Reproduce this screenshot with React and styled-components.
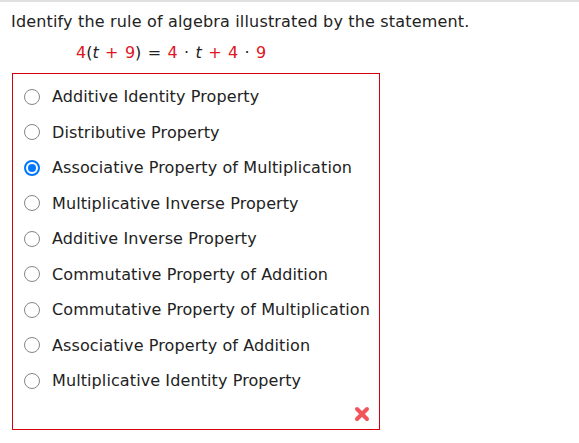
import React from "react";
import styled, { createGlobalStyle } from "styled-components";

const GlobalStyle = createGlobalStyle`
  body {
    margin: 0;
    background: #fff;
    font-family: Verdana, "DejaVu Sans", sans-serif;
    color: #222;
  }
`;

const Page = styled.div`
  border-top: 2px solid #e0e0e0;
  padding: 10px 0 0 11px;
`;

const Prompt = styled.div`
  font-size: 16px;
  line-height: 20px;
  letter-spacing: 0.17px;
  color: #222;
`;

const Equation = styled.div`
  margin: 11px 0 0 65px;
  font-size: 16px;
  line-height: 20px;
  word-spacing: 1.3px;
  color: #222;
`;

const Num = styled.span`
  color: #e0141e;
`;

const Var = styled.i`
  font-style: italic;
`;

const AnswerBox = styled.div`
  margin-top: 10px;
  margin-left: 1px;
  width: 368px;
  height: 357px;
  border: 1px solid #d9000d;
  box-sizing: border-box;
  position: relative;
  padding-top: 5px;
`;

const Option = styled.label`
  display: flex;
  align-items: center;
  height: 35.5px;
  padding-left: 11px;
  font-size: 16px;
  letter-spacing: 0.1px;
  color: #222;
`;

const Radio = styled.span`
  width: 16px;
  height: 16px;
  box-sizing: border-box;
  border-radius: 50%;
  border: ${p => (p.checked ? "2px solid #0075ff" : "1px solid #858585")};
  margin-right: 12px;
  display: flex;
  align-items: center;
  justify-content: center;
  flex-shrink: 0;
  &::after {
    content: "";
    display: ${p => (p.checked ? "block" : "none")};
    width: 8px;
    height: 8px;
    border-radius: 50%;
    background: #0075ff;
  }
`;

const WrongMark = styled.svg`
  position: absolute;
  right: 9px;
  bottom: 7px;
`;

const options = [
  "Additive Identity Property",
  "Distributive Property",
  "Associative Property of Multiplication",
  "Multiplicative Inverse Property",
  "Additive Inverse Property",
  "Commutative Property of Addition",
  "Commutative Property of Multiplication",
  "Associative Property of Addition",
  "Multiplicative Identity Property",
];

export default function App() {
  return (
    <>
      <GlobalStyle />
      <Page>
        <Prompt>Identify the rule of algebra illustrated by the statement.</Prompt>
        <Equation>
          <Num>4</Num>(<Var>t</Var> <Num>+</Num> <Num>9</Num>) = <Num>4</Num> · <Var>t</Var>{" "}
          <Num>+</Num> <Num>4</Num> · <Num>9</Num>
        </Equation>
        <AnswerBox>
          {options.map((o, i) => (
            <Option key={o}>
              <Radio checked={i === 2} />
              {o}
            </Option>
          ))}
          <WrongMark width="16" height="16" viewBox="0 0 16 16">
            <path d="M3 3 L13 13 M13 3 L3 13" stroke="#f2545b" strokeWidth="4" strokeLinecap="round" />
          </WrongMark>
        </AnswerBox>
      </Page>
    </>
  );
}
